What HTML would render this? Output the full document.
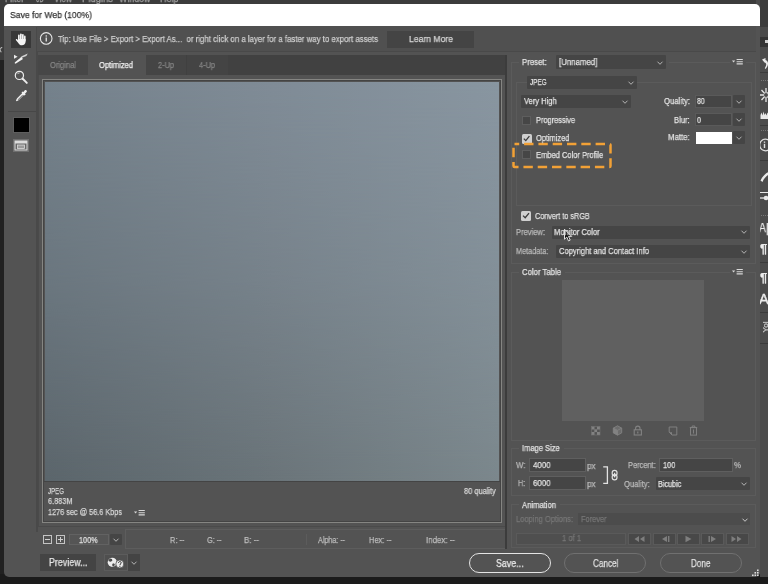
<!DOCTYPE html>
<html><head><meta charset="utf-8"><title>Save for Web</title>
<style>
html,body{margin:0;padding:0;}
body{width:768px;height:584px;position:relative;overflow:hidden;background:#232323;font-family:"Liberation Sans",sans-serif;}
div,span,svg{position:absolute;box-sizing:border-box;}
.t{white-space:pre;-webkit-text-stroke:0.25px;will-change:transform;transform-origin:0 50%;line-height:14px;height:14px;}
.dd{background:#454545;border-radius:1px;}
.inp{background:#454545;border:1px solid #5f5f5f;}
.fs{border:1px solid #5b5b5b;}
.cb{width:9px;height:9px;background:#464646;border:1px solid #5e5e5e;}
.cbc{width:10px;height:9.5px;background:#cfcfcf;border-radius:1.5px;}
.pill{border:1px solid #707070;border-radius:10px;}
.btn{background:#444;}

</style></head>
<body>
<!-- backdrop -->
<div style="left:0;top:0;width:768px;height:60px;background:#3c3c3c"></div>
<div style="left:0;top:60px;width:8px;height:524px;background:#212121"></div>
<div style="left:756px;top:0;width:12px;height:584px;background:#4b4b4b"></div>
<div style="left:0;top:574px;width:768px;height:10px;background:#1b1b1b"></div>
<!-- dialog -->
<div id="dlg" style="left:4px;top:4px;width:756px;height:573px;background:#535353;border-radius:5px;overflow:hidden">
  <div style="left:0;top:0;width:756px;height:22px;background:#fff"></div>
</div>
<!-- toolbar -->
<div style="left:35.5px;top:27px;width:2px;height:505px;background:#494949"></div>
<div style="left:11px;top:31px;width:20px;height:17px;background:#383838"></div>
<div style="left:8px;top:110.5px;width:28px;height:1px;background:#474747"></div>
<div style="left:13px;top:116.5px;width:17px;height:16.5px;background:#000;border:1px solid #5e5e5e"></div>
<!-- tip bar -->
<div style="left:37px;top:26px;width:719px;height:25px;background:#505050"></div>
<div style="left:37px;top:51.3px;width:719px;height:1px;background:#494949"></div>
<div class="btn" style="left:387px;top:30.5px;width:87px;height:17.5px;"></div>
<!-- tabs -->
<div style="left:38px;top:54.5px;width:468px;height:20.5px;background:#414141"></div>
<div style="left:38px;top:54.5px;width:50px;height:20.5px;background:#474747"></div>
<div style="left:145.5px;top:54.5px;width:41.5px;height:20.5px;background:#454545;border-right:1px solid #404040"></div>
<div style="left:187px;top:54.5px;width:40.7px;height:20.5px;background:#444"></div>
<div style="left:88px;top:54.5px;width:57.5px;height:21.5px;background:#535353"></div>
<!-- preview frame -->
<div style="left:38px;top:75px;width:468px;height:452px;border:1px solid #4a4a4a;border-top:none"></div>
<div style="left:42px;top:79px;width:460px;height:444px;border:1px solid #858582;"></div>
<div style="left:43px;top:80px;width:458px;height:442px;border:1px solid #444;"></div>
<div id="img" style="left:45px;top:82px;width:454px;height:399px;background:linear-gradient(90deg,#75828c 0%,#808c97 50%,#8996a1 100%)"></div><div id="img2" style="left:45px;top:82px;width:454px;height:399px;background:linear-gradient(90deg,#5b656b 0%,#6a7479 50%,#7b878c 100%);-webkit-mask-image:linear-gradient(180deg,rgba(0,0,0,0) 0%,rgba(0,0,0,.4) 50%,rgba(0,0,0,1) 100%);mask-image:linear-gradient(180deg,rgba(0,0,0,0) 0%,rgba(0,0,0,.4) 50%,rgba(0,0,0,1) 100%)"></div>
<div style="left:44px;top:481px;width:456px;height:1px;background:#444"></div>
<!-- zoom row -->
<div style="left:43px;top:535px;width:9.3px;height:8.7px;border:1px solid #c4c4c4"></div>
<div style="left:45px;top:539px;width:5px;height:1px;background:#cfcfcf"></div>
<div style="left:55.7px;top:535px;width:9.3px;height:8.7px;border:1px solid #c4c4c4"></div>
<div style="left:58px;top:539px;width:5px;height:1px;background:#cfcfcf"></div>
<div style="left:60px;top:537px;width:1px;height:5px;background:#cfcfcf"></div>
<div style="left:68.5px;top:534px;width:40.5px;height:11px;background:#555;border:1px solid #626262"></div>
<div class="dd" style="left:110px;top:534px;width:12px;height:11px;"></div>
<div style="left:124.5px;top:528.5px;width:381.5px;height:20.5px;border:1px solid #5d5d5d;border-right:none"></div>
<div style="left:305.5px;top:534px;width:1px;height:11px;background:#5c5c5c"></div>
<!-- bottom buttons -->
<div class="btn" style="left:40px;top:553.5px;width:56px;height:17.5px;"></div>
<div style="left:103.5px;top:553.5px;width:24px;height:17.5px;background:#4f4f4f;border:1px solid #5c5c5c"></div>
<div class="btn" style="left:128px;top:553.5px;width:12px;height:17.5px;"></div>
<div class="pill" style="left:469px;top:553px;width:82px;height:20px;border-color:#e4e4e4"></div>
<div class="pill" style="left:564px;top:553px;width:82px;height:20px;"></div>
<div class="pill" style="left:660px;top:553px;width:82px;height:20px;"></div>
<!-- right panel -->
<div style="left:505px;top:55px;width:2px;height:494px;background:#3c3c3c"></div>
<div class="fs" style="left:511px;top:62px;width:245px;height:202px;"></div>
<div style="left:519px;top:58px;width:150px;height:8px;background:#535353"></div>
<div style="left:730px;top:58px;width:16px;height:8px;background:#535353"></div>
<div class="dd" style="left:556px;top:55px;width:110px;height:14px;"></div>
<div class="fs" style="left:516px;top:82px;width:236px;height:124px;"></div>
<div class="dd" style="left:527px;top:76px;width:110px;height:13px;"></div>
<div class="dd" style="left:521px;top:95px;width:110px;height:13px;"></div>
<div class="inp" style="left:695px;top:95px;width:37px;height:13px;border-color:#5a5a5a"></div>
<div class="dd" style="left:733px;top:95px;width:12px;height:13px;"></div>
<div class="cb" style="left:522px;top:116px;"></div>
<div class="inp" style="left:695px;top:113px;width:37px;height:13px;border-color:#5a5a5a"></div>
<div class="dd" style="left:733px;top:113px;width:12px;height:13px;"></div>
<div class="cbc" style="left:522px;top:134px;"></div>
<div style="left:696px;top:132px;width:36px;height:12px;background:#fff"></div>
<div class="dd" style="left:733px;top:131px;width:12px;height:13px;"></div>
<div class="cb" style="left:522px;top:150px;"></div>
<!-- orange highlight -->
<svg style="left:510px;top:140px" width="106" height="32" viewBox="0 0 106 32"><rect x="3.5" y="4" width="97" height="23" fill="none" stroke="#f2a136" stroke-width="2.5" stroke-dasharray="9.4 4.9" stroke-dashoffset="4.7" rx="1"/></svg>
<div class="cbc" style="left:521px;top:211px;"></div>
<div class="dd" style="left:552px;top:226px;width:198px;height:13px;"></div>
<div class="dd" style="left:556px;top:245px;width:194px;height:13px;"></div>
<!-- color table -->
<div class="fs" style="left:511px;top:272px;width:245px;height:169px;"></div>
<div style="left:519px;top:268px;width:46px;height:8px;background:#535353"></div>
<div style="left:730px;top:268px;width:16px;height:8px;background:#535353"></div>
<div style="left:562px;top:280px;width:142px;height:141px;background:#606060"></div>
<!-- image size -->
<div class="fs" style="left:511px;top:448px;width:245px;height:48px;"></div>
<div style="left:519px;top:444px;width:45px;height:8px;background:#535353"></div>
<div class="inp" style="left:529px;top:458px;width:57px;height:14px;"></div>
<div class="inp" style="left:529px;top:476px;width:57px;height:14px;"></div>
<div class="inp" style="left:659px;top:458px;width:74px;height:14px;"></div>
<div class="dd" style="left:656px;top:477px;width:94px;height:13px;"></div>
<!-- animation -->
<div class="fs" style="left:511px;top:504px;width:245px;height:44px;"></div>
<div style="left:519px;top:500px;width:41px;height:8px;background:#535353"></div>
<div style="left:578px;top:513px;width:172px;height:12px;background:#4c4c4c"></div>
<div style="left:516px;top:533px;width:110px;height:12px;background:#4f4f4f;border:1px solid #5a5a5a"></div>
<div style="left:628px;top:533px;width:23px;height:12px;background:#484848;border:1px solid #5a5a5a"></div>
<div style="left:652.6px;top:533px;width:23px;height:12px;background:#484848;border:1px solid #5a5a5a"></div>
<div style="left:677px;top:533px;width:23px;height:12px;background:#484848;border:1px solid #5a5a5a"></div>
<div style="left:701.4px;top:533px;width:23px;height:12px;background:#484848;border:1px solid #5a5a5a"></div>
<div style="left:725.6px;top:533px;width:23px;height:12px;background:#484848;border:1px solid #5a5a5a"></div>

<!-- ICONS -->
<!-- hand -->
<svg style="left:14px;top:32px" width="14" height="15" viewBox="0 0 14 15"><g fill="#f4f4f4"><rect x="4" y="2.600" width="1.700" height="6" rx=".85"/><rect x="6" y="1.400" width="1.700" height="7" rx=".85"/><rect x="8" y="2" width="1.700" height="7" rx=".85"/><rect x="10" y="3.600" width="1.600" height="6" rx=".8"/><path d="M4 7h7.600v2.500c0 2.300-1.500 3.700-3.700 3.700-1.700 0-2.700-.8-3.600-2.300L2 8.200c-.5-.9.500-1.600 1.200-.9L4 8.200z"/></g></svg>
<!-- slice select -->
<svg style="left:13px;top:53px" width="16" height="12" viewBox="0 0 16 12"><path d="M1 1.800l3.600 2-3.600 2z" fill="#ececec"/><path d="M14.800 .6L8.600 3.200 7 5.400l6.400-2.400z" fill="#d2d2d2"/><path d="M8.300 4L2 9.300c-.7.700 0 1.700.9 1.200L10 6z" fill="#f2f2f2"/></svg>
<!-- zoom -->
<svg style="left:13px;top:69px" width="16" height="16" viewBox="0 0 16 16"><circle cx="6.400" cy="6.400" r="4.100" fill="none" stroke="#ededed" stroke-width="1.200"/><path d="M9.500 9.500l4.300 4.400" stroke="#ededed" stroke-width="1.900" stroke-linecap="round"/><path d="M4.300 5.200a2.600 2.600 0 0 1 2.300-1.300" stroke="#ededed" stroke-width=".7" fill="none"/></svg>
<!-- eyedropper -->
<svg style="left:14px;top:89px" width="14" height="14" viewBox="0 0 14 14"><path d="M10.800 1.300c1.100-1.100 2.900.7 1.800 1.800l-1.600 1.600.7.700-1.200 1.200-.6-.6-5 5-2.200 1.200-.8-.8 1.200-2.200 5-5-.6-.6 1.200-1.200.7.700z" fill="#efefef"/><path d="M8.400 6l-4.300 4.300-.4.800.8-.4L8.800 6.400z" fill="#535353"/></svg>
<!-- slice visibility -->
<div style="left:13px;top:139px;width:16px;height:13px;background:#676767;border:1px solid #6f6f6f"></div>
<svg style="left:14px;top:140px" width="14" height="11" viewBox="0 0 14 11"><rect x="1" y="1" width="12" height="9" fill="none" stroke="#dcdcdc" stroke-width="1"/><rect x="1" y="1" width="12" height="2.500" fill="#dcdcdc"/><rect x="3.500" y="5" width="7" height="3.500" fill="#9a9a9a" stroke="#dcdcdc" stroke-width=".8"/></svg>
<!-- info -->
<svg style="left:39px;top:31px" width="15" height="15" viewBox="0 0 15 15"><circle cx="7.200" cy="7.400" r="5.800" fill="none" stroke="#e6e6e6" stroke-width="1.100"/><rect x="6.600" y="6.500" width="1.300" height="4" fill="#e6e6e6"/><rect x="6.600" y="4.300" width="1.300" height="1.300" fill="#e6e6e6"/></svg>

<svg style="left:655px;top:57.5px" width="10" height="10" viewBox="0 0 10 10"><path d="M2.5 3.7L5 6.3L7.5 3.7" fill="none" stroke="#b4b4b4" stroke-width="1.0"/></svg>
<svg style="left:626px;top:77.5px" width="10" height="10" viewBox="0 0 10 10"><path d="M2.5 3.7L5 6.3L7.5 3.7" fill="none" stroke="#b4b4b4" stroke-width="1.0"/></svg>
<svg style="left:620px;top:96.5px" width="10" height="10" viewBox="0 0 10 10"><path d="M2.5 3.7L5 6.3L7.5 3.7" fill="none" stroke="#b4b4b4" stroke-width="1.0"/></svg>
<svg style="left:734px;top:96.5px" width="10" height="10" viewBox="0 0 10 10"><path d="M2.5 3.7L5 6.3L7.5 3.7" fill="none" stroke="#b4b4b4" stroke-width="1.0"/></svg>
<svg style="left:734px;top:114.5px" width="10" height="10" viewBox="0 0 10 10"><path d="M2.5 3.7L5 6.3L7.5 3.7" fill="none" stroke="#b4b4b4" stroke-width="1.0"/></svg>
<svg style="left:734px;top:132.5px" width="10" height="10" viewBox="0 0 10 10"><path d="M2.5 3.7L5 6.3L7.5 3.7" fill="none" stroke="#b4b4b4" stroke-width="1.0"/></svg>
<svg style="left:739px;top:227px" width="10" height="10" viewBox="0 0 10 10"><path d="M2.5 3.7L5 6.3L7.5 3.7" fill="none" stroke="#b4b4b4" stroke-width="1.0"/></svg>
<svg style="left:739px;top:246.5px" width="10" height="10" viewBox="0 0 10 10"><path d="M2.5 3.7L5 6.3L7.5 3.7" fill="none" stroke="#b4b4b4" stroke-width="1.0"/></svg>
<svg style="left:739px;top:479px" width="10" height="10" viewBox="0 0 10 10"><path d="M2.5 3.7L5 6.3L7.5 3.7" fill="none" stroke="#b4b4b4" stroke-width="1.0"/></svg>
<svg style="left:111px;top:535px" width="10" height="10" viewBox="0 0 10 10"><path d="M2.5 3.7L5 6.3L7.5 3.7" fill="none" stroke="#b4b4b4" stroke-width="1.0"/></svg>
<svg style="left:129px;top:557.5px" width="10" height="10" viewBox="0 0 10 10"><path d="M2.5 3.7L5 6.3L7.5 3.7" fill="none" stroke="#b4b4b4" stroke-width="1.0"/></svg>
<svg style="left:739.5px;top:514.5px" width="10" height="10" viewBox="0 0 10 10"><path d="M2.5 3.7L5 6.3L7.5 3.7" fill="none" stroke="#c8c8c8" stroke-width="1.0"/></svg>
<svg style="left:732px;top:58px" width="12" height="8" viewBox="0 0 12 8"><path d="M0 2.600h3.200L1.600 4.600z" fill="#d8d8d8"/><path d="M4.600 1.500h6.200M4.600 3.700h6.200M4.600 5.900h6.200" stroke="#d8d8d8" stroke-width="1.100"/></svg>
<svg style="left:732px;top:267.5px" width="12" height="8" viewBox="0 0 12 8"><path d="M0 2.600h3.200L1.600 4.600z" fill="#d8d8d8"/><path d="M4.600 1.500h6.200M4.600 3.700h6.200M4.600 5.900h6.200" stroke="#d8d8d8" stroke-width="1.100"/></svg>
<svg style="left:133.5px;top:509px" width="12" height="8" viewBox="0 0 12 8"><path d="M0 2.600h3.200L1.600 4.600z" fill="#d8d8d8"/><path d="M4.600 1.500h6.200M4.600 3.700h6.200M4.600 5.900h6.200" stroke="#d8d8d8" stroke-width="1.100"/></svg>

<!-- checkmarks -->
<svg style="left:522px;top:134px" width="9" height="9" viewBox="0 0 9 9"><path d="M1.800 4.600l2 2 3.600-4.400" fill="none" stroke="#3a3a3a" stroke-width="1.300"/></svg>
<svg style="left:521px;top:211px" width="10" height="9" viewBox="0 0 10 9"><path d="M2 4.600l2.200 2.100 3.800-4.500" fill="none" stroke="#3a3a3a" stroke-width="1.300"/></svg>
<!-- color table icons -->
<svg style="left:591px;top:426px" width="10" height="10" viewBox="0 0 10 10"><g fill="#828282"><rect x=".5" y=".5" width="3" height="3"/><rect x="6" y=".5" width="3" height="3"/><rect x="3.300" y="3.300" width="2.800" height="2.800"/><rect x=".5" y="6" width="3" height="3"/><rect x="6" y="6" width="3" height="3"/></g><rect x=".5" y=".5" width="8.500" height="8.500" fill="none" stroke="#747474" stroke-width=".6"/></svg>
<svg style="left:612px;top:425px" width="11" height="11" viewBox="0 0 11 11"><path d="M5.500 .8l4.200 2.300v4.800l-4.200 2.300-4.200-2.300V3.100z" fill="#6c6c6c" stroke="#828282" stroke-width=".9"/><path d="M1.300 3.100l4.200 2.300 4.200-2.300M5.500 5.400v4.800" fill="none" stroke="#828282" stroke-width=".9"/><path d="M1.300 3.100l4.200 2.300v4.800L1.300 7.900z" fill="#828282"/></svg>
<svg style="left:633px;top:425px" width="10" height="11" viewBox="0 0 10 11"><path d="M2.600 5V3.300a2.200 2.200 0 0 1 4.400 0V5" fill="none" stroke="#828282" stroke-width="1.100"/><rect x="1.200" y="4.800" width="7.200" height="5.200" fill="none" stroke="#828282" stroke-width="1.100"/><rect x="4.200" y="6.500" width="1.200" height="2" fill="#828282"/></svg>
<svg style="left:668px;top:426px" width="10" height="10" viewBox="0 0 10 10"><path d="M8.800 1H1.200v5.200L4 9h4.800z" fill="none" stroke="#808080" stroke-width="1"/><path d="M1.200 6.200H4V9z" fill="#808080"/></svg>
<svg style="left:689px;top:425px" width="9" height="11" viewBox="0 0 9 11"><path d="M.8 2.500h7.400M3.200 2.300V1h2.600v1.300" fill="none" stroke="#808080" stroke-width="1"/><rect x="1.500" y="2.600" width="6" height="7.500" fill="none" stroke="#808080" stroke-width="1"/><path d="M4.500 4.500v4" stroke="#808080" stroke-width="1"/></svg>
<!-- link bracket + chain -->
<svg style="left:602px;top:465px" width="18" height="21" viewBox="0 0 18 21"><path d="M1.200 1.800h4.200v16.500H1.200" fill="none" stroke="#e2e2e2" stroke-width="1.300"/><rect x="10.200" y="5.300" width="4.800" height="5.400" rx="2.300" fill="none" stroke="#e2e2e2" stroke-width="1.200"/><rect x="10.200" y="9.500" width="4.800" height="5.400" rx="2.300" fill="none" stroke="#e2e2e2" stroke-width="1.200"/><path d="M12.600 7.800v4.600" stroke="#e2e2e2" stroke-width="1.300"/></svg>
<!-- playback -->
<svg style="left:628px;top:533px" width="120" height="12" viewBox="0 0 120 12"><g fill="#7e7e7e">
<path d="M11 3v6L6.500 6zM16.500 3v6L12 6z"/>
<path d="M39 3v6l-5-3z"/><rect x="40" y="3" width="1.400" height="6"/>
<path d="M57.500 2.800v6.400L63.500 6z"/>
<rect x="80.500" y="3" width="1.400" height="6"/><path d="M83 3v6l5-3z"/>
<path d="M103.500 3v6l4.500-3zM109 3v6l4.500-3z"/></g></svg>
<!-- globe + ? -->
<svg style="left:106px;top:556px" width="20" height="14" viewBox="0 0 20 14"><circle cx="6.300" cy="6.300" r="4.600" fill="#ececec"/><path d="M4.200 2.500l1.800.6.300 1.600-1.600 1.100-1.800-.5-.6-1.200zM7 7.200l1.900.9-.6 2-1.500.6-.7-1.900z" fill="#4a4a4a"/><circle cx="13.800" cy="8" r="4" fill="#ececec" stroke="#4e4e4e" stroke-width=".8"/><path d="M12.500 6.900c0-1.800 2.700-1.800 2.700-.1 0 1-1.300 1.100-1.300 2.200" fill="none" stroke="#333" stroke-width="1"/><rect x="13.300" y="9.700" width="1.100" height="1.100" fill="#333"/></svg>
<!-- resize grip -->
<svg style="left:751px;top:569px" width="9" height="8" viewBox="0 0 9 8"><g fill="#e0e0e0"><rect x="6" y=".5" width="1.600" height="1.600"/><rect x="3.500" y="3" width="1.600" height="1.600"/><rect x="6" y="3" width="1.600" height="1.600"/><rect x="1" y="5.500" width="1.600" height="1.600"/><rect x="3.500" y="5.500" width="1.600" height="1.600"/><rect x="6" y="5.500" width="1.600" height="1.600"/></g></svg>
<!-- mouse cursor -->
<svg style="left:562.7px;top:228.2px" width="10" height="15" viewBox="0 0 10 15"><path d="M1.500 1.200v10l2.300-2.200 1.700 3.900 1.700-.8-1.700-3.700h3.200z" fill="#0a0a0a" stroke="#f4f4f4" stroke-width=".9" stroke-linejoin="round"/></svg>

<!-- right collapsed panel strip -->
<div id="strip" style="left:760px;top:0;width:8px;height:577px;overflow:hidden;background:#4b4b4b">
  <div style="left:0;top:0;width:8px;height:27px;background:#3c3c3c"></div>
  <div style="left:0;top:37px;width:8px;height:9.500px;background:#353535"></div>
  <div style="left:5px;top:40px;width:3px;height:3px;background:#d0d0d0"></div>
  <svg style="left:1px;top:57px" width="8" height="13" viewBox="0 0 8 13"><path d="M1 2.500l3.500-1.500v2c3 1 3.500 5 .5 8.500-.5.500-1.500 0-1-.7 1.800-2.600 1.600-4.800-.5-5.300z" fill="#e8e8e8"/></svg>
  <div style="left:0;top:71.500px;width:8px;height:1px;background:#3a3a3a"></div>
  <div style="left:1px;top:79.500px;width:7px;height:1px;background:repeating-linear-gradient(90deg,#777 0 1px,transparent 1px 2px)"></div>
  <svg style="left:0px;top:87px" width="9" height="16" viewBox="0 0 9 16"><g stroke="#e4e4e4" stroke-width="1.300"><path d="M6 1v14M0 8h9M1.500 3l9 10M1.500 13l9-10"/></g><circle cx="6" cy="8" r="2" fill="#4b4b4b"/></svg>
  <svg style="left:0px;top:110px" width="9" height="10" viewBox="0 0 9 10"><path d="M.5 9V5l1-2.500 1 3 1-4 1 3.500 1-2 1 2.500 1-3 1 2V9z" fill="#e8e8e8"/></svg>
  <div style="left:0;top:124.500px;width:8px;height:1px;background:#3a3a3a"></div>
  <div style="left:1px;top:130px;width:7px;height:1px;background:repeating-linear-gradient(90deg,#777 0 1px,transparent 1px 2px)"></div>
  <svg style="left:-1px;top:137px" width="12" height="16" viewBox="0 0 12 16"><circle cx="6.500" cy="8" r="5.800" fill="none" stroke="#e0e0e0" stroke-width="1.200"/><rect x="4.800" y="6.800" width="1.400" height="4.200" fill="#e0e0e0"/><rect x="4.800" y="4.500" width="1.400" height="1.300" fill="#e0e0e0"/></svg>
  <div style="left:0;top:160px;width:8px;height:1px;background:#3a3a3a"></div>
  <svg style="left:0px;top:170px" width="9" height="14" viewBox="0 0 9 14"><path d="M.5 10.500C2 7 5 3.500 9 1.800v2.500C6 6 3.500 9 2.500 12z" fill="#e8e8e8"/></svg>
  <svg style="left:0px;top:192px" width="9" height="12" viewBox="0 0 9 12"><path d="M0 6h9" stroke="#e8e8e8" stroke-width="1.300"/><circle cx="6" cy="6" r="2.300" fill="#e8e8e8"/><path d="M0 .5h9" stroke="#e8e8e8" stroke-width="1" /></svg>
  <div style="left:1px;top:215px;width:7px;height:1px;background:repeating-linear-gradient(90deg,#777 0 1px,transparent 1px 2px)"></div>
  <span class="t" style="left:-1px;top:219.500px;font-size:13px;line-height:16px;height:16px;color:#ececec;transform:scaleX(.8)">A|</span>
  <span class="t" style="left:0px;top:241px;font-size:13px;line-height:16px;height:16px;color:#ececec;font-weight:bold">¶</span>
  <div style="left:0;top:262px;width:8px;height:1px;background:#3a3a3a"></div>
  <span class="t" style="left:0px;top:270px;font-size:13px;line-height:16px;height:16px;color:#ececec;font-weight:bold">¶</span>
  <span class="t" style="left:-1px;top:290px;font-size:14.500px;line-height:18px;height:18px;color:#ececec;-webkit-text-stroke:.4px">A</span>
  <div style="left:0;top:312px;width:8px;height:1px;background:#3a3a3a"></div>
  <span class="t" style="left:-2.500px;top:321px;font-size:8px;line-height:12px;height:12px;width:16px;color:#c8c8c8;transform:rotate(-90deg);transform-origin:50% 50%;text-align:center">Yol</span>
  <div style="left:0;top:343px;width:8px;height:1px;background:#3a3a3a"></div>
</div>
<!-- fx glyph in left strip -->
<div style="left:0;top:40px;width:4px;height:20px;overflow:hidden"><span class="t" style="left:-5px;top:2px;font-size:9px;color:#c0c0c0;font-style:italic">fx</span></div>

<!-- text -->
<span class="t" style="left:10.0px;top:8.2px;font-size:9.4px;transform:scaleX(0.9167);color:#333333;">Save for Web (100%)</span>
<span class="t" style="left:58.0px;top:32.0px;font-size:9.2px;transform:scaleX(0.8522);color:#cfcfcf;">Tip: Use File &gt; Export &gt; Export As...  or right click on a layer for a faster way to export assets</span>
<span class="t" style="left:409.0px;top:32.2px;font-size:9.4px;transform:scaleX(0.9176);color:#d8d8d8;">Learn More</span>
<span class="t" style="left:50.0px;top:58.3px;font-size:8.9px;transform:scaleX(0.8498);color:#858585;">Original</span>
<span class="t" style="left:99.0px;top:58.3px;font-size:8.9px;transform:scaleX(0.8510);color:#f0f0f0;">Optimized</span>
<span class="t" style="left:158.0px;top:58.3px;font-size:8.9px;transform:scaleX(0.8312);color:#858585;">2-Up</span>
<span class="t" style="left:199.0px;top:58.3px;font-size:8.9px;transform:scaleX(0.8312);color:#858585;">4-Up</span>
<span class="t" style="left:522.0px;top:55.0px;font-size:9.2px;transform:scaleX(0.8485);color:#e2e2e2;">Preset:</span>
<span class="t" style="left:559.0px;top:55.0px;font-size:9.2px;transform:scaleX(0.8520);color:#e2e2e2;">[Unnamed]</span>
<span class="t" style="left:530.0px;top:75.3px;font-size:9.2px;transform:scaleX(0.6958);color:#e2e2e2;">JPEG</span>
<span class="t" style="left:524.0px;top:94.3px;font-size:9.2px;transform:scaleX(0.8207);color:#e2e2e2;">Very High</span>
<span class="t" style="left:664.0px;top:94.0px;font-size:9.2px;transform:scaleX(0.8345);color:#e2e2e2;">Quality:</span>
<span class="t" style="left:697.3px;top:94.3px;font-size:9.2px;transform:scaleX(0.7524);color:#e2e2e2;">80</span>
<span class="t" style="left:535.7px;top:113.0px;font-size:9.2px;transform:scaleX(0.8039);color:#e2e2e2;">Progressive</span>
<span class="t" style="left:674.0px;top:112.7px;font-size:9.2px;transform:scaleX(0.8304);color:#e2e2e2;">Blur:</span>
<span class="t" style="left:697.3px;top:112.7px;font-size:9.2px;transform:scaleX(0.7805);color:#e2e2e2;">0</span>
<span class="t" style="left:535.7px;top:131.0px;font-size:9.2px;transform:scaleX(0.8051);color:#e2e2e2;">Optimized</span>
<span class="t" style="left:668.0px;top:130.3px;font-size:9.2px;transform:scaleX(0.8499);color:#e2e2e2;">Matte:</span>
<span class="t" style="left:535.7px;top:147.7px;font-size:9.2px;transform:scaleX(0.8185);color:#e2e2e2;">Embed Color Profile</span>
<span class="t" style="left:535.0px;top:208.7px;font-size:9.2px;transform:scaleX(0.7876);color:#e2e2e2;">Convert to sRGB</span>
<span class="t" style="left:515.7px;top:224.7px;font-size:9.2px;transform:scaleX(0.8231);color:#bababa;">Preview:</span>
<span class="t" style="left:554.0px;top:224.7px;font-size:9.2px;transform:scaleX(0.8286);color:#e2e2e2;">Monitor Color</span>
<span class="t" style="left:515.7px;top:244.3px;font-size:9.2px;transform:scaleX(0.7905);color:#bababa;">Metadata:</span>
<span class="t" style="left:559.0px;top:244.3px;font-size:9.2px;transform:scaleX(0.8234);color:#e2e2e2;">Copyright and Contact Info</span>
<span class="t" style="left:522.3px;top:264.7px;font-size:9.2px;transform:scaleX(0.8421);color:#e2e2e2;">Color Table</span>
<span class="t" style="left:522.3px;top:441.3px;font-size:9.2px;transform:scaleX(0.8201);color:#e2e2e2;">Image Size</span>
<span class="t" style="left:516.3px;top:458.0px;font-size:9.2px;transform:scaleX(0.8497);color:#bababa;">W:</span>
<span class="t" style="left:533.0px;top:458.0px;font-size:9.2px;transform:scaleX(0.8654);color:#e2e2e2;">4000</span>
<span class="t" style="left:587.3px;top:458.5px;font-size:9.2px;transform:scaleX(0.8952);color:#bababa;">px</span>
<span class="t" style="left:628.0px;top:458.0px;font-size:9.2px;transform:scaleX(0.8095);color:#bababa;">Percent:</span>
<span class="t" style="left:663.3px;top:458.0px;font-size:9.2px;transform:scaleX(0.8081);color:#e2e2e2;">100</span>
<span class="t" style="left:734.0px;top:458.0px;font-size:9.2px;transform:scaleX(0.8566);color:#bababa;">%</span>
<span class="t" style="left:518.0px;top:476.0px;font-size:9.2px;transform:scaleX(0.7619);color:#bababa;">H:</span>
<span class="t" style="left:533.0px;top:476.0px;font-size:9.2px;transform:scaleX(0.8654);color:#e2e2e2;">6000</span>
<span class="t" style="left:587.3px;top:476.5px;font-size:9.2px;transform:scaleX(0.8952);color:#bababa;">px</span>
<span class="t" style="left:624.0px;top:476.7px;font-size:9.2px;transform:scaleX(0.8249);color:#bababa;">Quality:</span>
<span class="t" style="left:658.0px;top:476.7px;font-size:9.2px;transform:scaleX(0.7865);color:#e2e2e2;">Bicubic</span>
<span class="t" style="left:522.3px;top:497.7px;font-size:9.2px;transform:scaleX(0.8321);color:#e2e2e2;">Animation</span>
<span class="t" style="left:516.0px;top:512.0px;font-size:9.2px;transform:scaleX(0.8205);color:#767676;">Looping Options:</span>
<span class="t" style="left:580.7px;top:512.0px;font-size:9.2px;transform:scaleX(0.8087);color:#767676;">Forever</span>
<span class="t" style="left:562.3px;top:531.3px;font-size:9.2px;transform:scaleX(0.8261);color:#767676;">1 of 1</span>
<span class="t" style="left:496.0px;top:556.5px;font-size:10.3px;transform:scaleX(0.8608);color:#ececec;">Save...</span>
<span class="t" style="left:592.7px;top:556.5px;font-size:10.3px;transform:scaleX(0.7891);color:#e0e0e0;">Cancel</span>
<span class="t" style="left:690.7px;top:556.5px;font-size:10.3px;transform:scaleX(0.7838);color:#e0e0e0;">Done</span>
<span class="t" style="left:49.0px;top:555.7px;font-size:10.3px;transform:scaleX(0.8624);color:#e6e6e6;">Preview...</span>
<span class="t" style="left:78.8px;top:532.7px;font-size:9.2px;transform:scaleX(0.7979);color:#e2e2e2;">100%</span>
<span class="t" style="left:169.5px;top:532.7px;font-size:8.9px;transform:scaleX(0.8398);color:#bdbdbd;">R: --</span>
<span class="t" style="left:207.0px;top:532.7px;font-size:8.9px;transform:scaleX(0.8169);color:#bdbdbd;">G: --</span>
<span class="t" style="left:244.0px;top:532.7px;font-size:8.9px;transform:scaleX(0.8947);color:#bdbdbd;">B: --</span>
<span class="t" style="left:318.0px;top:532.7px;font-size:8.9px;transform:scaleX(0.8048);color:#bdbdbd;">Alpha: --</span>
<span class="t" style="left:368.6px;top:532.7px;font-size:8.9px;transform:scaleX(0.8413);color:#bdbdbd;">Hex: --</span>
<span class="t" style="left:426.0px;top:532.7px;font-size:8.9px;transform:scaleX(0.8906);color:#bdbdbd;">Index: --</span>
<span class="t" style="left:48.0px;top:484.0px;font-size:8.9px;transform:scaleX(0.6900);color:#d8d8d8;">JPEG</span>
<span class="t" style="left:48.0px;top:493.7px;font-size:8.9px;transform:scaleX(0.8274);color:#d8d8d8;">6.883M</span>
<span class="t" style="left:48.0px;top:504.5px;font-size:8.9px;transform:scaleX(0.8228);color:#d8d8d8;">1276 sec @ 56.6 Kbps</span>
<span class="t" style="left:463.5px;top:483.5px;font-size:8.9px;transform:scaleX(0.8368);color:#d8d8d8;">80 quality</span>
<span class="t" style="left:5.0px;top:-7.7px;font-size:10px;transform:scaleX(0.8545);color:#a4a4a4;">Filter</span>
<span class="t" style="left:35.6px;top:-7.7px;font-size:10px;transform:scaleX(0.6173);color:#a4a4a4;">3D</span>
<span class="t" style="left:54.0px;top:-7.7px;font-size:10px;transform:scaleX(0.8372);color:#a4a4a4;">View</span>
<span class="t" style="left:81.5px;top:-7.7px;font-size:10px;transform:scaleX(0.9448);color:#a4a4a4;">Plugins</span>
<span class="t" style="left:118.5px;top:-7.7px;font-size:10px;transform:scaleX(0.8854);color:#a4a4a4;">Window</span>
<span class="t" style="left:160.0px;top:-7.7px;font-size:10px;transform:scaleX(0.8990);color:#a4a4a4;">Help</span>
</body></html>
